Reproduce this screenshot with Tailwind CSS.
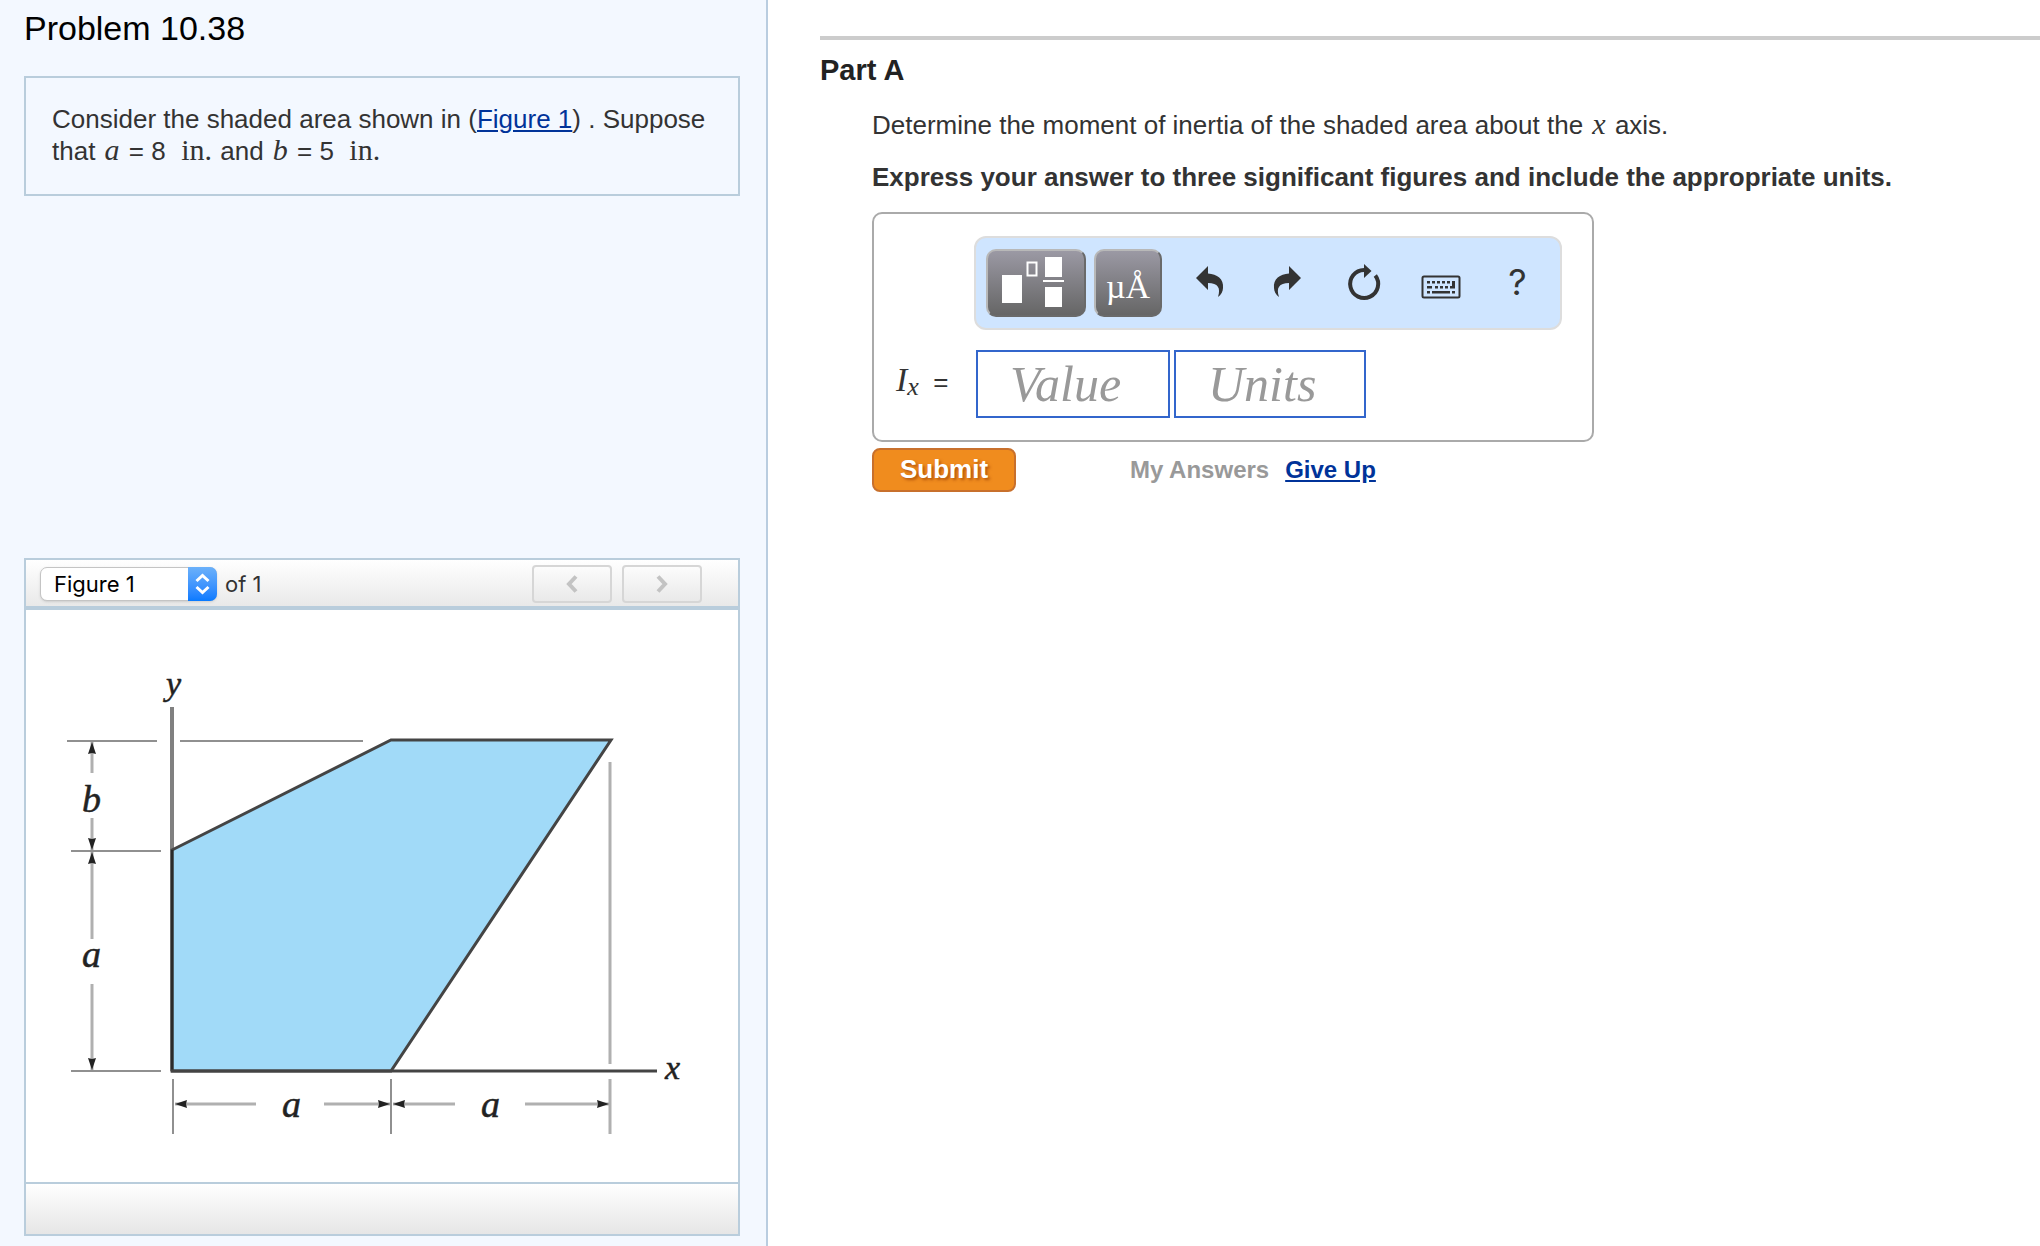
<!DOCTYPE html>
<html lang="en">
<head>
  <meta charset="UTF-8" />
  <meta name="viewport" content="width=device-width, initial-scale=1.0"/>
  <title>Problem 10.38</title>
  <script src="https://cdn.jsdelivr.net/npm/@tailwindcss/browser@4"></script>
</head>
<body class="bg-white font-['Liberation_Sans',Arial,sans-serif] text-[26px] leading-8 text-[#333]">
  <div class="flex min-h-screen">

    <!-- Problem and figure -->
    <aside class="flex w-[768px] shrink-0 flex-col border-r-2 border-[#b9cde0] bg-[#f3f8ff] pt-2 pr-[26px] pb-[10px] pl-6">
      <h1 class="text-[34px] leading-10 text-black">Problem 10.38</h1>

      <div class="mt-7 border-2 border-[#b9cddc] px-[26px] pt-[25px] pb-[27px]">
        <p>Consider the shaded area shown in (<a href="#figure" class="text-[#039] underline">Figure 1</a>) . Suppose that <i class="px-[2px] font-['Liberation_Serif',serif] text-[30px] leading-7">a</i> = 8 &nbsp;<span class="px-px font-['Liberation_Serif',serif] text-[30px] leading-7">in.</span> and <i class="px-[2px] font-['Liberation_Serif',serif] text-[30px] leading-7">b</i> = 5 &nbsp;<span class="px-px font-['Liberation_Serif',serif] text-[30px] leading-7">in.</span></p>
      </div>

      <section id="figure" class="mt-auto border-2 border-[#b9cddc] bg-white">
        <div class="flex h-[50px] items-center border-b-4 border-[#b9cddc] bg-linear-to-b from-white to-[#e9e9e9] pt-[2px] pr-9 pl-[14px] font-[Inter,sans-serif] text-[22px]">
          <div class="relative h-[34px] w-[177px]">
            <select id="figure-select" aria-label="Figure" class="h-full w-full appearance-none rounded-[7px] border border-[#c4c4c4] bg-white pl-[13px] text-black shadow-sm">
              <option>Figure 1</option>
            </select>
            <svg class="pointer-events-none absolute top-0 right-0 h-[34px] w-[29px] rounded-r-[7px] bg-linear-to-b from-[#6bb1fa] to-[#067aff]" viewBox="0 0 29 34" fill="none" stroke="#fff" stroke-width="3">
              <path d="M8.500 14 14.500 8.500 20.500 14M8.500 20 14.500 25.500 20.500 20"/>
            </svg>
          </div>
          <label for="figure-select" class="ml-2">of 1</label>
          <button disabled aria-label="Previous figure" class="ml-auto flex h-[38px] w-20 items-center justify-center rounded border-2 border-[#d6d6d6] bg-linear-to-b from-[#fcfcfc] to-[#e9e9e9]">
            <svg class="h-5 w-4" viewBox="0 0 16 20" fill="none" stroke="#c3c3c3" stroke-width="4"><path d="M12 2.500 5 10 12 17.500"/></svg>
          </button>
          <button disabled aria-label="Next figure" class="ml-[10px] flex h-[38px] w-20 items-center justify-center rounded border-2 border-[#d6d6d6] bg-linear-to-b from-[#fcfcfc] to-[#e9e9e9]">
            <svg class="h-5 w-4" viewBox="0 0 16 20" fill="none" stroke="#c3c3c3" stroke-width="4"><path d="M4 2.500 11 10 4 17.500"/></svg>
          </button>
        </div>

        <svg class="block w-full" viewBox="0 0 712 572" fill="none">
          <defs>
            <marker id="arrow" viewBox="0 0 12 8" refX="12" refY="4" markerWidth="12" markerHeight="8" markerUnits="userSpaceOnUse" orient="auto-start-reverse">
              <path d="M0 0 12 4 0 8 1 4z" fill="#222"/>
            </marker>
          </defs>
          <!-- extension lines -->
          <path d="M41 131H131M154 131H337M45 241H135M45 461H135M147 469V524M365 469V524" stroke="#909090" stroke-width="2"/>
          <path d="M584 152V454M584 469V524" stroke="#b0b0b0" stroke-width="3"/>
          <!-- dimension lines -->
          <g stroke="#b0b0b0" stroke-width="3">
            <path d="M66 163V132" marker-end="url(#arrow)"/>
            <path d="M66 208V240" marker-end="url(#arrow)"/>
            <path d="M66 329V242" marker-end="url(#arrow)"/>
            <path d="M66 374V460" marker-end="url(#arrow)"/>
            <path d="M230 494H149" marker-end="url(#arrow)"/>
            <path d="M298 494H364" marker-end="url(#arrow)"/>
            <path d="M429 494H367" marker-end="url(#arrow)"/>
            <path d="M499 494H583" marker-end="url(#arrow)"/>
          </g>
          <!-- axes and shaded area -->
          <path d="M146 97V240" stroke="#808080" stroke-width="4"/>
          <path d="M146 240 365 130H585L365 461H146z" fill="#a1daf8" stroke="#444" stroke-width="3"/>
          <path d="M146 240V461" stroke="#2b2b2b" stroke-width="3"/>
          <path d="M145 461H631" stroke="#444" stroke-width="3"/>
          <g class="font-['Liberation_Serif',serif] text-[38px] italic" fill="#222" stroke="#222" stroke-width="0.500">
            <text x="56" y="202">b</text>
            <text x="56" y="357">a</text>
            <text x="256" y="507">a</text>
            <text x="455" y="507">a</text>
          </g>
          <g class="font-['Liberation_Serif',serif] text-[34px] italic" fill="#222" stroke="#222" stroke-width="0.500">
            <text x="140" y="85">y</text>
            <text x="639" y="469">x</text>
          </g>
        </svg>
        <div class="h-[52px] border-t-2 border-[#b9cddc] bg-linear-to-b from-white to-[#e6e6e6]"></div>
      </section>
    </aside>

    <!-- Answer -->
    <main class="flex-1 pt-9 pl-[52px]">
      <div class="border-t-4 border-[#ccc] pt-[14px]">
        <h2 class="text-[29px] font-bold text-[#222]">Part A</h2>

        <form class="mt-[23px] pl-[52px]" onsubmit="return false">
          <p>Determine the moment of inertia of the shaded area about the <i class="px-[2px] font-['Liberation_Serif',serif] text-[30px] leading-7">x</i> axis.</p>
          <p class="mt-5 font-bold">Express your answer to three significant figures and include the appropriate units.</p>

          <div class="mt-[19px] w-fit rounded-[10px] border-2 border-[#aaa] pt-[22px] pr-[30px] pb-[22px]">
            <div class="ml-[100px] flex h-[94px] w-[588px] items-center rounded-xl border-2 border-[#ddd] bg-[#cfe5ff] pl-[10px]">
              <button type="button" aria-label="Templates" class="h-[68px] w-[100px] rounded-[10px] border-2 border-t-[#b8b8b8] border-r-[#6a6a6a] border-b-[#6a6a6a] border-l-[#b8b8b8] bg-linear-to-b from-[#9b99a4] to-[#666]">
                <svg class="h-16 w-24" viewBox="0 0 96 64" fill="#fff">
                  <path d="M14 24h20v28H14zM57 6h17v20H57zM55 29h21v2H55zM57 36h17v20H57z"/>
                  <path d="M39.500 11.500h9v13h-9z" fill="none" stroke="#fff" stroke-width="2"/>
                </svg>
              </button>
              <button type="button" aria-label="Units and symbols" class="ml-2 h-[68px] w-[68px] rounded-[10px] border-2 border-t-[#b8b8b8] border-r-[#6a6a6a] border-b-[#6a6a6a] border-l-[#b8b8b8] bg-linear-to-b from-[#9b99a4] to-[#666] pt-2 font-['Liberation_Serif',serif] text-[34px] text-white">µÅ</button>
              <div class="ml-[9px] flex pb-[2px]">
                <button type="button" aria-label="Undo" class="flex h-[68px] w-[77px] items-center justify-center">
                  <svg class="h-8 w-7" viewBox="0 0 28 32" fill="#333"><path d="M0 12 12 0V7.500C21 8 28 13 27 22 27 25 25 29 22 31 25 22 22 17 12 17V24z"/></svg>
                </button>
                <button type="button" aria-label="Redo" class="flex h-[68px] w-[77px] items-center justify-center">
                  <svg class="h-8 w-7" viewBox="0 0 28 32" fill="#333"><path d="M28 12 16 0V7.500C7 8 0 13 1 22 1 25 3 29 6 31 3 22 6 17 16 17V24z"/></svg>
                </button>
                <button type="button" aria-label="Reset" class="flex h-[68px] w-[77px] items-center justify-center">
                  <svg class="h-10 w-9" viewBox="0 0 36 40" fill="none"><path d="M29.300 13.500A14 14 0 1 1 18 8" stroke="#333" stroke-width="4"/><path d="M18 2V16L25.500 9z" fill="#333"/></svg>
                </button>
                <button type="button" aria-label="Keyboard" class="flex h-[68px] w-[77px] items-center justify-center pt-[10px]">
                  <svg class="h-6 w-10" viewBox="0 0 40 24" fill="#333">
                    <rect x="1.500" y="1.500" width="37" height="21" rx="1.500" fill="none" stroke="#333" stroke-width="2"/>
                    <path d="M6 6h3v2.500H6zM11 6h3v2.500h-3zM16 6h3v2.500h-3zM21 6h3v2.500h-3zM26 6h3v2.500h-3zM31 6h3v7.500h-5V11h2zM6 11h5v2.500H6zM14 11h3v2.500h-3zM19 11h3v2.500h-3zM24 11h3v2.500h-3zM6 16h3v2.500H6zM11 16h18v2.500H11zM31 16h3v2.500h-3z"/>
                  </svg>
                </button>
                <button type="button" aria-label="Help" class="h-[68px] w-[77px] font-[Inter,sans-serif] text-[36px] text-[#333]">?</button>
              </div>
            </div>

            <div class="mt-5 flex items-center">
              <label for="value" class="w-[102px] pb-[6px] pl-[22px]"><i class="font-['Liberation_Serif',serif] text-[34px]">I<sub class="-bottom-1 text-[26px] leading-none">x</sub></i>&nbsp; =</label>
              <input id="value" type="text" placeholder="Value" class="h-[68px] w-[194px] border-2 border-[#3366cc] pl-8 font-['Liberation_Serif',serif] text-[50px] italic placeholder:text-[#999]" />
              <input type="text" aria-label="Units" placeholder="Units" class="ml-1 h-[68px] w-[192px] border-2 border-[#3366cc] pl-8 font-['Liberation_Serif',serif] text-[50px] italic placeholder:text-[#999]" />
            </div>
          </div>

          <div class="mt-[6px] flex items-center text-[24px] font-bold">
            <button type="submit" class="h-11 w-36 rounded-lg border-2 border-[#c8702c] bg-[#f08c1e] pb-[2px] text-[26px] text-white text-shadow-[2px_2px_3px_rgb(140_50_0/0.6)]">Submit</button>
            <span class="ml-[114px] text-[#999]">My Answers</span>
            <a href="#" class="ml-4 text-[#039] underline">Give Up</a>
          </div>
        </form>
      </div>
    </main>
  </div>
</body>
</html>
